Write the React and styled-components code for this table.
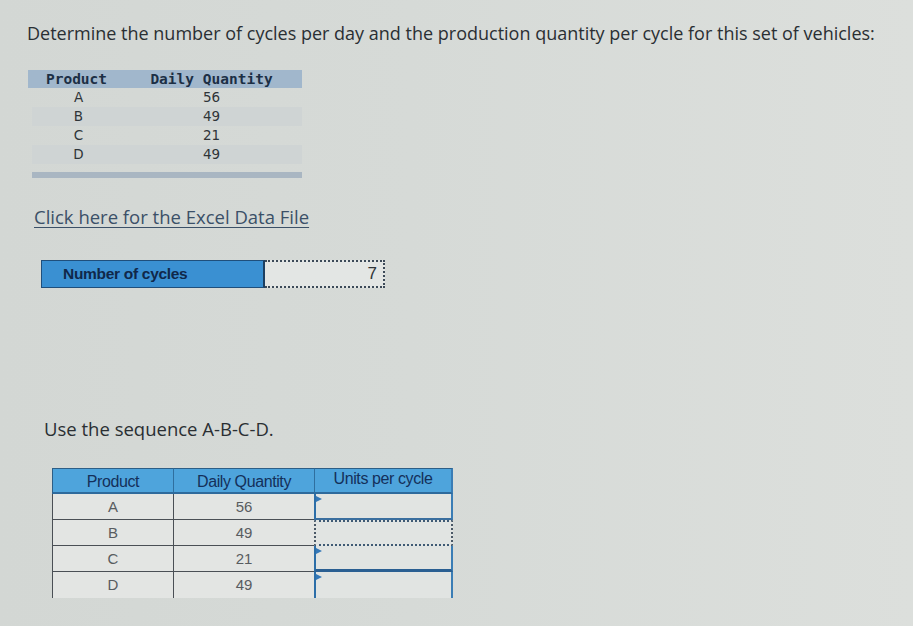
import React from "react";
import styled, { createGlobalStyle } from "styled-components";

const GlobalStyle = createGlobalStyle`
  html, body {
    margin: 0;
    padding: 0;
  }
  body {
    width: 913px;
    height: 626px;
    overflow: hidden;
    background: linear-gradient(90deg, #d3d7d4 0%, #d6dad7 45%, #dcdfdc 100%);
    font-family: "Open Sans", "Liberation Sans", sans-serif;
    color: #2b3035;
  }
`;

const Page = styled.div`
  padding: 21px 0 0 27px;
  display: flex;
  flex-direction: column;
  align-items: flex-start;
`;

const Prompt = styled.div`
  font-size: ${p => p.size || 18}px;
  line-height: 24px;
  color: #2a2f33;
  margin-left: ${p => p.indent || 0}px;
  margin-top: ${p => p.top || 0}px;
`;

const DataTable = styled.div`
  margin-top: 25px;
  margin-left: 1px;
  display: flex;
  flex-direction: column;
`;

const DataHead = styled.div`
  display: grid;
  grid-template-columns: 97px 173px;
  height: 18px;
  background: #a1b7cc;
  font-family: "DejaVu Sans Mono", "Liberation Mono", monospace;
  font-weight: bold;
  font-size: 14.5px;
  line-height: 18px;
  color: #1c2f45;
  text-align: center;
`;

const DataRow = styled.div`
  display: grid;
  grid-template-columns: 93px 173px;
  margin-left: 4px;
  height: 19px;
  line-height: 19px;
  font-family: "DejaVu Sans", "Liberation Sans", sans-serif;
  font-size: 13.5px;
  color: #2f3438;
  text-align: center;
  background: ${p => (p.shade ? "#cfd4d4" : "transparent")};
`;

const DataFoot = styled.div`
  margin-top: 8px;
  margin-left: 4px;
  width: 270px;
  height: 6px;
  background: #a9b6c2;
`;

const Link = styled.a`
  margin-top: 27px;
  margin-left: 7px;
  font-size: 18.5px;
  line-height: 24px;
  color: #3b5068;
  text-decoration: underline;
  text-underline-offset: 3px;
  text-decoration-thickness: 1px;
`;

const CycleBox = styled.div`
  margin-top: 31px;
  margin-left: 14px;
  display: flex;
  height: 28px;
  width: 344px;
`;

const CycleLabel = styled.div`
  width: 200px;
  padding-left: 21px;
  background: #3a90d2;
  border: 1px solid #1f4f7c;
  border-right: 2px solid #1d3f60;
  font-family: "Liberation Sans", Arial, sans-serif;
  font-weight: bold;
  font-size: 15.5px;
  letter-spacing: -0.3px;
  line-height: 26px;
  color: #10284a;
`;

const CycleInput = styled.div`
  flex: 1;
  border: 2px dotted #3c4a58;
  border-left: none;
  background: #e3e6e4;
  text-align: right;
  padding-right: 6px;
  font-family: "Liberation Sans", Arial, sans-serif;
  font-size: 17px;
  line-height: 24px;
  color: #2f3438;
`;

const Grid = styled.div`
  margin-top: 27px;
  margin-left: 25px;
  display: grid;
  grid-template-columns: 121px 141px 139px;
  font-family: "Liberation Sans", Arial, sans-serif;
`;

const HeadCell = styled.div`
  height: 26px;
  background: #4ea4dc;
  border-top: 1px solid #2d5e86;
  border-bottom: 2px solid #2e6a9c;
  border-left: ${p => (p.first ? "1px solid #2d5e86" : "1px solid #2f6f9f")};
  border-right: ${p => (p.last ? "2px solid #3a7db5" : "none")};
  box-sizing: border-box;
  text-align: center;
  font-size: 16px;
  letter-spacing: -0.4px;
  line-height: ${p => (p.last ? "20px" : "26px")};
  color: #14305a;
`;

const Cell = styled.div`
  height: 26px;
  box-sizing: border-box;
  background: #e3e5e3;
  border-left: 1px solid #4a4f55;
  border-bottom: ${p => (p.end ? "none" : "1px solid #4a4f55")};
  text-align: center;
  font-size: 15px;
  line-height: 26px;
  color: #585c60;
`;

const AnswerCell = styled.div`
  position: relative;
  height: 26px;
  box-sizing: border-box;
  background: #e1e4e2;
  border-left: ${p => (p.focus ? "2px dotted #4a5866" : "2px solid #2c6ea8")};
  border-right: ${p => (p.focus ? "2px dotted #4a5866" : "2px solid #3a7db5")};
  border-bottom: ${p =>
    p.heavy ? "3px solid #2a5f92" : p.focus ? "2px dotted #3f5a74" : p.end ? "none" : "2px solid #3b6f9f"};
  border-top: ${p => (p.focus ? "2px dotted #3f5a74" : "none")};

  &::before {
    content: "";
    display: ${p => (p.flag ? "block" : "none")};
    position: absolute;
    left: 0;
    top: 2px;
    border-left: 6px solid #3478b8;
    border-top: 3px solid transparent;
    border-bottom: 3px solid transparent;
  }
`;

const rows = [
  { p: "A", q: 56 },
  { p: "B", q: 49 },
  { p: "C", q: 21 },
  { p: "D", q: 49 },
];

export default function App() {
  return (
    <>
      <GlobalStyle />
      <Page>
        <Prompt>
          Determine the number of cycles per day and the production quantity per cycle for this set of vehicles:
        </Prompt>

        <DataTable>
          <DataHead>
            <span>Product</span>
            <span>Daily Quantity</span>
          </DataHead>
          {rows.map((r, i) => (
            <DataRow key={r.p} shade={i % 2 === 1}>
              <span>{r.p}</span>
              <span>{r.q}</span>
            </DataRow>
          ))}
          <DataFoot />
        </DataTable>

        <Link href="#">Click here for the Excel Data File</Link>

        <CycleBox>
          <CycleLabel>Number of cycles</CycleLabel>
          <CycleInput>7</CycleInput>
        </CycleBox>

        <Prompt indent={17} top={129} size={18.5}>Use the sequence A-B-C-D.</Prompt>

        <Grid>
          <HeadCell first>Product</HeadCell>
          <HeadCell>Daily Quantity</HeadCell>
          <HeadCell last>Units per cycle</HeadCell>
          {rows.map((r, i) => (
            <React.Fragment key={r.p}>
              <Cell end={i === 3}>{r.p}</Cell>
              <Cell end={i === 3}>{r.q}</Cell>
              <AnswerCell
                focus={i === 1}
                heavy={i === 2}
                end={i === 3}
                flag={i !== 1}
              />
            </React.Fragment>
          ))}
        </Grid>
      </Page>
    </>
  );
}
